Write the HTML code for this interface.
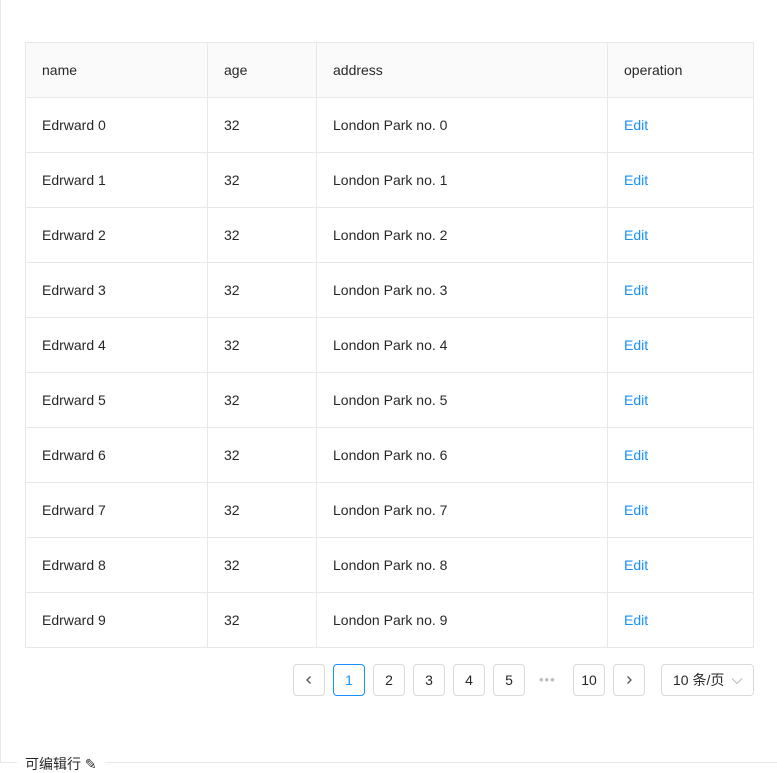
<!DOCTYPE html>
<html><head><meta charset="utf-8"><style>
body{margin:0;width:777px;height:763px;overflow:hidden;background:#fff;font-family:"Liberation Sans","Noto Sans CJK SC",sans-serif;font-size:14px;color:rgba(0,0,0,.85);position:relative}
.lb{position:absolute;left:0;top:0;width:1px;height:763px;background:#e8e8e8}
.bb{position:absolute;left:0;top:762px;width:777px;height:1px;background:#e8e8e8}
table{position:absolute;left:25px;top:42px;border-collapse:collapse;width:729px}
td,th{border:1px solid #e8e8e8;height:55px;padding:0 16px;text-align:left;font-weight:normal;box-sizing:border-box}
tr{height:55px}
th{background:#fafafa}
a{color:#1890ff}
.pg{position:absolute;top:664px;width:30px;height:30px;border:1px solid #d9d9d9;border-radius:4px;text-align:center;line-height:30px;box-sizing:content-box}
.cap{position:absolute;left:17px;top:755px;background:#fff;padding:0 8px;font-size:14px;line-height:18px}
</style></head><body>
<div class="lb"></div><div class="bb"></div>
<table>
<tr><th style="width:182px">name</th><th style="width:109px">age</th><th style="width:291px">address</th><th>operation</th></tr>
<tr><td>Edrward 0</td><td>32</td><td>London Park no. 0</td><td><a>Edit</a></td></tr>
<tr><td>Edrward 1</td><td>32</td><td>London Park no. 1</td><td><a>Edit</a></td></tr>
<tr><td>Edrward 2</td><td>32</td><td>London Park no. 2</td><td><a>Edit</a></td></tr>
<tr><td>Edrward 3</td><td>32</td><td>London Park no. 3</td><td><a>Edit</a></td></tr>
<tr><td>Edrward 4</td><td>32</td><td>London Park no. 4</td><td><a>Edit</a></td></tr>
<tr><td>Edrward 5</td><td>32</td><td>London Park no. 5</td><td><a>Edit</a></td></tr>
<tr><td>Edrward 6</td><td>32</td><td>London Park no. 6</td><td><a>Edit</a></td></tr>
<tr><td>Edrward 7</td><td>32</td><td>London Park no. 7</td><td><a>Edit</a></td></tr>
<tr><td>Edrward 8</td><td>32</td><td>London Park no. 8</td><td><a>Edit</a></td></tr>
<tr><td>Edrward 9</td><td>32</td><td>London Park no. 9</td><td><a>Edit</a></td></tr>
</table>
<div class="pg" style="left:293px"><svg width="10" height="10" viewBox="0 0 10 10" style="margin-top:10px"><path d="M6.5 1.5L3 5l3.5 3.5" stroke="#555" fill="none" stroke-width="1.3"/></svg></div>
<div class="pg" style="left:333px;border-color:#1890ff;color:#1890ff">1</div>
<div class="pg" style="left:373px">2</div>
<div class="pg" style="left:413px">3</div>
<div class="pg" style="left:453px">4</div>
<div class="pg" style="left:493px">5</div>
<div style="position:absolute;left:539px;top:672px;color:#bbb;font-size:13px;letter-spacing:1px">•••</div>
<div class="pg" style="left:573px">10</div>
<div class="pg" style="left:613px"><svg width="10" height="10" viewBox="0 0 10 10" style="margin-top:10px"><path d="M3.5 1.5L7 5l-3.5 3.5" stroke="#555" fill="none" stroke-width="1.3"/></svg></div>
<div class="pg" style="left:661px;width:91px;text-align:left"><span style="margin-left:11px">10 条/页</span><svg width="12" height="8" viewBox="0 0 12 8" style="position:absolute;right:10px;top:12px"><path d="M1 1.5l5 5 5-5" stroke="#bbb" fill="none"/></svg></div>
<div class="cap">可编辑行 ✎</div>
</body></html>
